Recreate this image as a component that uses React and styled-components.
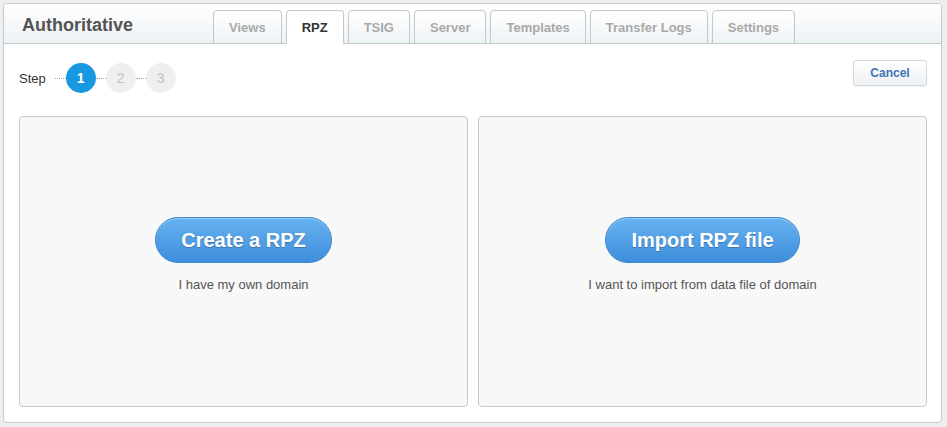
import React from "react";
import styled, { createGlobalStyle } from "styled-components";

const Global = createGlobalStyle`
  html, body { margin: 0; padding: 0; }
  body {
    background: #eceef0;
    font-family: "Liberation Sans", Arial, sans-serif;
  }
`;

const Panel = styled.div`
  margin: 3px 5px 4px 3px;
  height: 420px;
  box-sizing: border-box;
  background: #fff;
  border: 1px solid #c6c9cc;
  border-radius: 4px;
  display: flex;
  flex-direction: column;
  overflow: hidden;
`;

const Header = styled.div`
  height: 40px;
  box-sizing: border-box;
  display: flex;
  align-items: flex-end;
  border-bottom: 1px solid #c3c8cc;
  background: linear-gradient(#ffffff, #edf2f5);
`;

const Title = styled.div`
  flex: 0 0 191px;
  padding-left: 18px;
  align-self: center;
  font-size: 18px;
  font-weight: bold;
  color: #545454;
  margin-top: 4px;
`;

const Tabs = styled.div`
  display: flex;
  gap: 4px;
  margin-bottom: -1px;
`;

const Tab = styled.div`
  height: 34px;
  box-sizing: border-box;
  padding: 0 15px;
  display: flex;
  align-items: center;
  font-size: 13px;
  font-weight: bold;
  color: ${(p) => (p.$active ? "#333" : "#a9a9a9")};
  border: 1px solid #c3c8cc;
  border-bottom-color: ${(p) => (p.$active ? "#fff" : "#c3c8cc")};
  border-radius: 4px 4px 0 0;
  background: ${(p) => (p.$active ? "#fff" : "linear-gradient(#ffffff, #eef3f5)")};
`;

const Body = styled.div`
  flex: 1;
  display: flex;
  flex-direction: column;
  padding: 16px 14px 15px 15px;
`;

const TopRow = styled.div`
  display: flex;
  justify-content: space-between;
  align-items: flex-start;
`;

const Steps = styled.div`
  display: flex;
  align-items: center;
  margin-top: 3px;
  height: 30px;
`;

const StepLabel = styled.span`
  font-size: 13px;
  color: #333;
  margin-right: 9px;
`;

const Dots = styled.span`
  width: ${(p) => p.$w}px;
  border-top: 1px dotted #a8a8a8;
`;

const Circle = styled.span`
  width: 30px;
  height: 30px;
  border-radius: 50%;
  display: flex;
  align-items: center;
  justify-content: center;
  font-size: 14px;
  font-weight: ${(p) => (p.$active ? "bold" : "normal")};
  color: ${(p) => (p.$active ? "#fff" : "#c2c2c2")};
  background: ${(p) => (p.$active ? "#1898e0" : "#efefef")};
`;

const CancelButton = styled.button`
  width: 74px;
  height: 26px;
  font-family: inherit;
  font-size: 12px;
  font-weight: bold;
  color: #3d74b3;
  background: linear-gradient(#ffffff, #edf1f4);
  border: 1px solid #d3d8dc;
  border-radius: 3px;
  box-shadow: 0 1px 1px rgba(0, 0, 0, 0.06);
  padding: 0;
`;

const Cards = styled.div`
  margin-top: 23px;
  flex: 1;
  display: grid;
  grid-template-columns: 449px 1fr;
  gap: 10px;
`;

const Card = styled.div`
  background: #f8f8f8;
  border: 1px solid #c9c9c9;
  border-radius: 4px;
  display: flex;
  flex-direction: column;
  align-items: center;
  padding-top: 100px;
`;

const BigButton = styled.button`
  height: 46px;
  padding: 0 25px;
  border-radius: 23px;
  border: 1px solid #3b86cf;
  background: linear-gradient(#66b1f1, #3e8edb);
  box-shadow: inset 0 1px 0 rgba(255, 255, 255, 0.35);
  color: #fff;
  font-family: inherit;
  font-size: 20px;
  font-weight: bold;
  text-shadow: 0 1px 1px rgba(0, 0, 0, 0.25);
`;

const Caption = styled.div`
  margin-top: 14px;
  font-size: 13px;
  color: #555;
`;

export default function App() {
  const tabs = ["Views", "RPZ", "TSIG", "Server", "Templates", "Transfer Logs", "Settings"];
  return (
    <>
      <Global />
      <Panel>
        <Header>
          <Title>Authoritative</Title>
          <Tabs>
            {tabs.map((t) => (
              <Tab key={t} $active={t === "RPZ"}>
                {t}
              </Tab>
            ))}
          </Tabs>
        </Header>
        <Body>
          <TopRow>
            <Steps>
              <StepLabel>Step</StepLabel>
              <Dots $w={11} />
              <Circle $active>1</Circle>
              <Dots $w={10} />
              <Circle>2</Circle>
              <Dots $w={10} />
              <Circle>3</Circle>
            </Steps>
            <CancelButton>Cancel</CancelButton>
          </TopRow>
          <Cards>
            <Card>
              <BigButton>Create a RPZ</BigButton>
              <Caption>I have my own domain</Caption>
            </Card>
            <Card>
              <BigButton>Import RPZ file</BigButton>
              <Caption>I want to import from data file of domain</Caption>
            </Card>
          </Cards>
        </Body>
      </Panel>
    </>
  );
}
